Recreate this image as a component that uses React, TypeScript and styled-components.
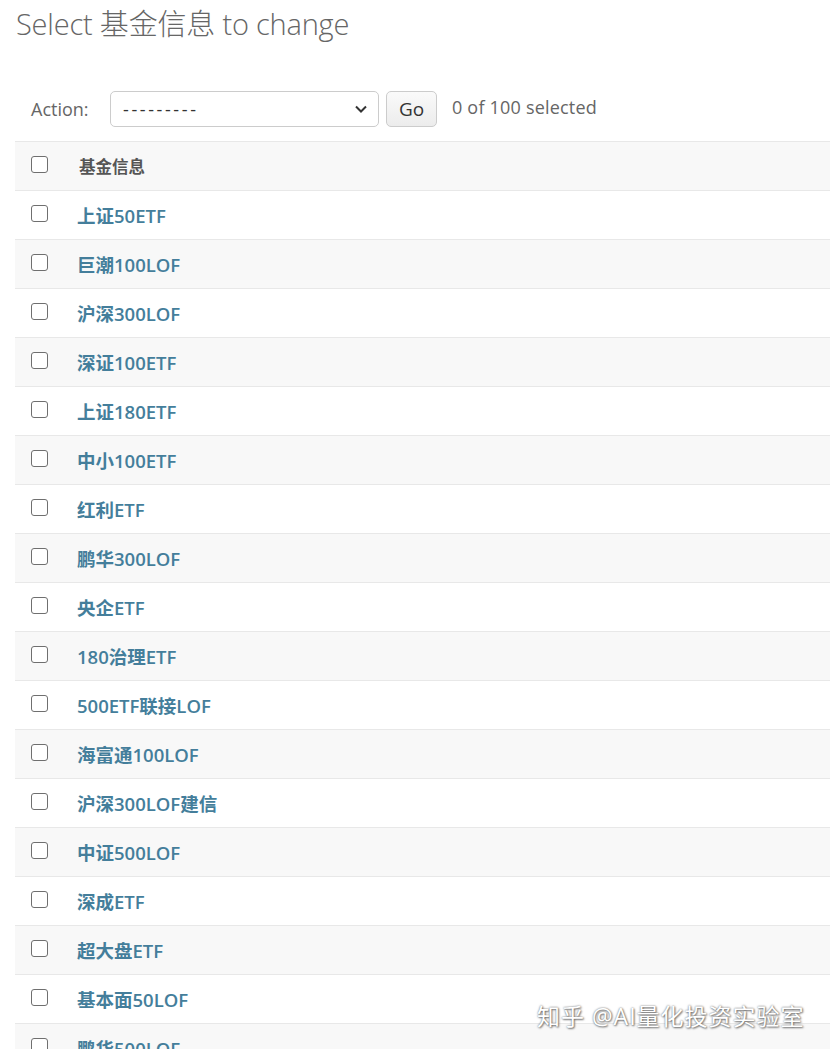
import React from "react";
import styled, { createGlobalStyle } from "styled-components";

const GlobalStyle = createGlobalStyle`
  html, body {
    margin: 0;
    padding: 0;
    background: #fff;
  }
  body {
    font-family: "Open Sans", "Noto Sans CJK SC", sans-serif;
    overflow: hidden;
  }
`;

const Page = styled.div`
  position: relative;
  height: 1049px;
  overflow: hidden;
  padding-left: 15px;
`;

const Title = styled.h1`
  margin: 0;
  padding: 1px 0 0 1px;
  height: 81px;
  box-sizing: border-box;
  font-size: 29px;
  font-weight: 300;
  color: #666;
  letter-spacing: -0.2px;
`;

const ActionBar = styled.div`
  display: flex;
  align-items: center;
  height: 56px;
  padding: 0 0 4px 16px;
  color: #666;
  font-size: 18px;
`;

const Label = styled.span`
  width: 79px;
`;

const SelectBox = styled.div`
  box-sizing: border-box;
  width: 269px;
  height: 36px;
  border: 1px solid #ccc;
  border-radius: 5px;
  display: flex;
  align-items: center;
  justify-content: space-between;
  padding: 0 10px 0 12px;
  color: #333;
  font-size: 18px;
  letter-spacing: 2.6px;
  background: #fff;
`;

const GoButton = styled.button`
  box-sizing: border-box;
  margin-left: 7px;
  width: 51px;
  height: 36px;
  border: 1px solid #ccc;
  border-radius: 5px;
  background: linear-gradient(#fafafa, #ececec);
  color: #333;
  font-family: inherit;
  font-size: 19px;
  padding: 0;
`;

const Counter = styled.span`
  margin-left: 15px;
  margin-top: -4px;
  letter-spacing: 0.2px;
`;

const Table = styled.table`
  border-collapse: collapse;
  width: 900px;
`;

const Row = styled.tr<{ $shade: boolean }>`
  height: 49px;
  background: ${(p) => (p.$shade ? "#f8f8f8" : "#fff")};
  border-top: 1px solid #e8e8e8;
  border-bottom: 1px solid #e8e8e8;
`;

const CheckCell = styled.td`
  width: 46px;
  padding: 0 0 4px 16px;
  vertical-align: middle;
`;

const Check = styled.input`
  appearance: none;
  display: block;
  margin: 0;
  width: 17px;
  height: 17px;
  border: 1.5px solid #6f6f6f;
  border-radius: 3px;
  background: #fff;
`;

const HeadCell = styled.th`
  text-align: left;
  padding: 0 0 0 2px;
  font-size: 16.5px;
  font-weight: 700;
  color: #555;
`;

const NameCell = styled.td`
  padding: 0;
  font-size: 18.5px;
  font-weight: 600;
`;

const FundLink = styled.a`
  color: #447e9b;
  text-decoration: none;
`;

const Watermark = styled.div`
  position: absolute;
  left: 537px;
  top: 998px;
  font-size: 23px;
  color: #fff;
  letter-spacing: 1px;
  text-shadow: 0 0 2px #666, 1px 1px 2px #777;
`;

const funds = [
  "上证50ETF",
  "巨潮100LOF",
  "沪深300LOF",
  "深证100ETF",
  "上证180ETF",
  "中小100ETF",
  "红利ETF",
  "鹏华300LOF",
  "央企ETF",
  "180治理ETF",
  "500ETF联接LOF",
  "海富通100LOF",
  "沪深300LOF建信",
  "中证500LOF",
  "深成ETF",
  "超大盘ETF",
  "基本面50LOF",
  "鹏华500LOF",
];

export default function App() {
  return (
    <>
      <GlobalStyle />
      <Page>
        <Title>Select 基金信息 to change</Title>
        <ActionBar>
          <Label>Action:</Label>
          <SelectBox>
            <span>---------</span>
            <svg width="14" height="14" viewBox="0 0 14 14">
              <path d="M2 4.5 L7 9.5 L12 4.5" fill="none" stroke="#333" strokeWidth="2" />
            </svg>
          </SelectBox>
          <GoButton>Go</GoButton>
          <Counter>0 of 100 selected</Counter>
        </ActionBar>
        <Table>
          <thead>
            <Row $shade>
              <CheckCell>
                <Check type="checkbox" readOnly />
              </CheckCell>
              <HeadCell>基金信息</HeadCell>
            </Row>
          </thead>
          <tbody>
            {funds.map((name, i) => (
              <Row key={name} $shade={i % 2 === 1}>
                <CheckCell>
                  <Check type="checkbox" readOnly />
                </CheckCell>
                <NameCell>
                  <FundLink href="#">{name}</FundLink>
                </NameCell>
              </Row>
            ))}
          </tbody>
        </Table>
        <Watermark>知乎 @AI量化投资实验室</Watermark>
      </Page>
    </>
  );
}
